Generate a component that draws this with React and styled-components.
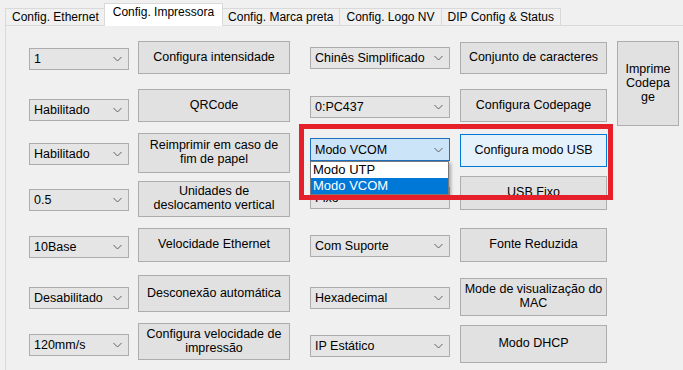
import styled, { createGlobalStyle, css } from 'styled-components';

const GlobalStyle = createGlobalStyle`
  html, body {
    margin: 0;
    background: #f0f0f0;
  }
  body {
    font-family: "Liberation Sans", Arial, sans-serif;
    font-size: 12px;
    color: #000;
  }
`;

const tabs = ['Config. Ethernet', 'Config. Impressora', 'Config. Marca preta', 'Config. Logo NV', 'DIP Config & Status'];

const leftRows = [
	{ value: '1', comboTop: 7, label: 'Configura intensidade', top: 0, h: 33 },
	{ value: 'Habilitado', comboTop: 11, label: 'QRCode', top: 1, h: 33 },
	{ value: 'Habilitado', comboTop: 8, label: 'Reimprimir em caso de\nfim de papel', top: -2, h: 40 },
	{ value: '0.5', comboTop: 7, label: 'Unidades de\ndeslocamento vertical', top: -1, h: 36 },
	{ value: '10Base', comboTop: 7, label: 'Velocidade Ethernet', top: -1, h: 34 },
	{ value: 'Desabilitado', comboTop: 11, label: 'Desconexão automática', top: -1, h: 37 },
	{ value: '120mm/s', comboTop: 11, label: 'Configura velocidade de\nimpressão', top: 0, h: 37 },
];

const midRows = [
	{ value: 'Chinês Simplificado', comboTop: 6, label: 'Conjunto de caracteres', top: 1, h: 32 },
	{ value: '0:PC437', comboTop: 8, label: 'Configura Codepage', top: 1, h: 33 },
	{ value: 'Modo VCOM', comboTop: 3, label: 'Configura modo USB', top: -1, h: 33, focused: true, open: ['Modo UTP', 'Modo VCOM'] },
	{ value: 'Fixo', comboTop: 5, label: 'USB Fixo', top: -6, h: 34 },
	{ value: 'Com Suporte', comboTop: 6, label: 'Fonte Reduzida', top: -1, h: 34 },
	{ value: 'Hexadecimal', comboTop: 11, label: 'Mode de visualização do\nMAC', top: 2, h: 38 },
	{ value: 'IP Estático', comboTop: 12, label: 'Modo DHCP', top: 2, h: 38 },
];

const Chevron = () => (
	<svg width="9" height="6" viewBox="0 0 9 6">
		<polyline points="0.5,1 4.5,5 8.5,1" fill="none" stroke="#606060" strokeWidth="1" />
	</svg>
);

const Combo = ({ value, top, focused, open }) => (
	<ComboWrap $top={top}>
		<ComboBox $focused={focused}>
			<span>{value}</span>
			<Chevron />
		</ComboBox>
		{open && (
			<DropList>
				{open.map((item) => (
					<DropItem key={item} $selected={item === value}>{item}</DropItem>
				))}
			</DropList>
		)}
	</ComboWrap>
);

const App = () => {
	return (
		<Window>
			<GlobalStyle />
			<TabBar>
				{tabs.map((t, i) => (
					<Tab key={t} $active={i === 1}>{t}</Tab>
				))}
			</TabBar>
			<Page>
				<Group $combo={100} $button={152} $gap={9}>
					{leftRows.map((r, i) => (
						<Row key={i}>
							<Combo value={r.value} top={r.comboTop} />
							<Button $top={r.top} $h={r.h}>{r.label}</Button>
						</Row>
					))}
				</Group>
				<Group $combo={140} $button={147} $gap={10}>
					{midRows.map((r, i) => (
						<Row key={i}>
							<Combo value={r.value} top={r.comboTop} focused={r.focused} open={r.open} />
							<Button $top={r.top} $h={r.h} $focused={r.focused}>{r.label}</Button>
						</Row>
					))}
				</Group>
				<SideColumn>
					<Button $h={85} $w={62}>{'Imprime\nCodepa\nge'}</Button>
				</SideColumn>
				<Highlight />
			</Page>
		</Window>
	);
};

const Window = styled.div`
	width: 683px;
	height: 370px;
	overflow: hidden;
	background: #f0f0f0;
`;

const TabBar = styled.div`
	display: flex;
	align-items: flex-end;
	height: 25px;
	padding-left: 5px;
`;

const Tab = styled.div`
	box-sizing: border-box;
	height: 17px;
	line-height: 16px;
	padding: 0 6px;
	border: 1px solid #d9d9d9;
	border-bottom: none;
	background: #f0f0f0;
	white-space: nowrap;
	& + & {
		border-left: none;
	}
	${(p) => p.$active && css`
		position: relative;
		z-index: 1;
		height: 23px;
		margin: 0 -1px -1px -2px;
		padding: 0 8px;
		background: #ffffff;
		border-left: 1px solid #d9d9d9 !important;
		& + div {
			border-left: none;
		}
	`}
`;

const Page = styled.div`
	position: relative;
	display: flex;
	align-items: flex-start;
	height: 400px;
	margin-left: 5px;
	padding: 15px 0 0 23px;
	border-top: 1px solid #d9d9d9;
	border-left: 1px solid #d9d9d9;
	font-size: 12.5px;
`;

const Group = styled.div`
	display: grid;
	grid-template-columns: ${(p) => p.$combo}px ${(p) => p.$button}px;
	grid-auto-rows: 47px;
	column-gap: ${(p) => p.$gap}px;
	margin-right: ${(p) => (p.$combo === 100 ? 20 : 10)}px;
`;

const Row = styled.div`
	display: contents;
`;

const SideColumn = styled.div`
	display: flex;
	flex-direction: column;
`;

const ComboWrap = styled.div`
	position: relative;
	margin-top: ${(p) => p.$top}px;
`;

const ComboBox = styled.div`
	box-sizing: border-box;
	display: flex;
	align-items: center;
	justify-content: space-between;
	height: 22px;
	padding: 0 6px 0 4px;
	background: #e5e5e5;
	border: 1px solid #adadad;
	white-space: nowrap;
	${(p) => p.$focused && css`
		height: 23px;
		background: #cce4f7;
		border-color: #1e6fc0;
	`}
`;

const DropList = styled.div`
	position: absolute;
	z-index: 2;
	left: 0;
	top: 23px;
	width: 139px;
	box-sizing: border-box;
	background: #ffffff;
	border: 1px solid #7a7a7a;
	box-shadow: 2px 2px 3px rgba(0, 0, 0, 0.3);
`;

const DropItem = styled.div`
	height: 16px;
	line-height: 16px;
	padding-left: 2px;
	font-size: 13px;
	${(p) => p.$selected && css`
		background: #0078d7;
		color: #ffffff;
	`}
`;

const Button = styled.div`
	box-sizing: border-box;
	display: flex;
	align-items: center;
	justify-content: center;
	width: ${(p) => (p.$w ? `${p.$w}px` : 'auto')};
	height: ${(p) => p.$h}px;
	margin-top: ${(p) => p.$top || 0}px;
	padding: 0 3px 2px;
	background: #e1e1e1;
	border: 1px solid #adadad;
	text-align: center;
	line-height: 14px;
	white-space: pre-line;
	${(p) => p.$focused && css`
		background: #e5f1fb;
		border-color: #0078d7;
	`}
`;

const Highlight = styled.div`
	position: absolute;
	left: 293px;
	top: 98px;
	width: 314px;
	height: 76px;
	box-sizing: border-box;
	border: 5px solid #e5202a;
	pointer-events: none;
	z-index: 3;
`;

export default App;
